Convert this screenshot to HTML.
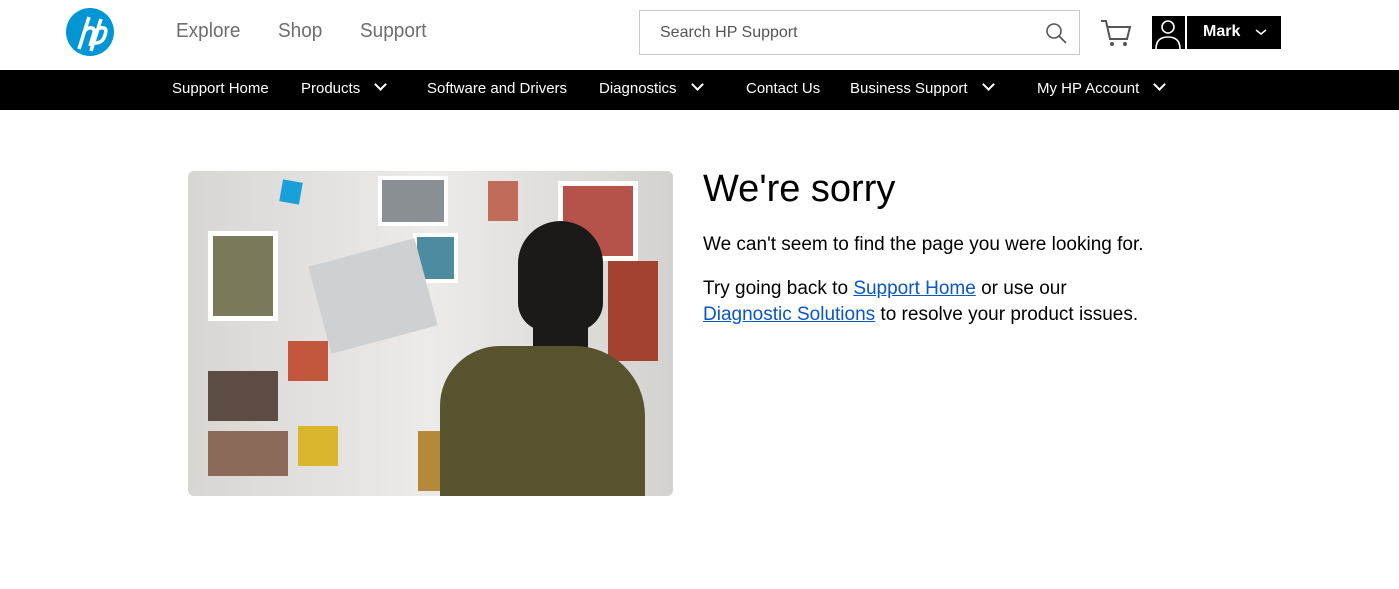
<!DOCTYPE html>
<html><head><style>
*{margin:0;padding:0;box-sizing:border-box}
body{width:1399px;height:589px;background:#fff;font-family:"Liberation Sans",sans-serif;position:relative;overflow:hidden}
.a{position:absolute}
.top a{color:#6e6e6e;font-size:20px;text-decoration:none;position:absolute;top:20px;transform:scaleX(0.95);transform-origin:left}
.nav{position:absolute;top:70px;left:0;width:1399px;height:40px;background:#000;color:#fff;font-size:15px}
.nav span{position:absolute;top:10px}
.chev{display:inline-block;width:9px;height:9px;border-right:2px solid #fff;border-bottom:2px solid #fff;transform:rotate(45deg);margin-left:16px;position:relative;top:-4px}
.p{font-size:19px;color:#000;position:absolute;left:703px}
.p a{color:#0a56c2;text-decoration:underline}
</style></head><body>
<svg class="a" style="left:66px;top:8px" width="48" height="48" viewBox="0 0 48 48"><circle cx="24" cy="24" r="24" fill="#0096d6"/><path d="M13 41 L23 9 M18 24 q3-5 8-4 q3 1 2 5 l-4 13 M25 43 L35 11 M31 22 q3-3 7-2 q3 1 1 7 q-2 8 -10 8" stroke="#fff" stroke-width="3.6" fill="none"/></svg>
<div class="top"><a style="left:176px">Explore</a><a style="left:278px">Shop</a><a style="left:360px">Support</a></div>
<div class="a" style="left:639px;top:10px;width:441px;height:45px;border:1px solid #c8c8c8"><span class="a" style="left:20px;top:13px;font-size:16px;color:#555">Search HP Support</span>
<svg class="a" style="left:405px;top:11px" width="22" height="22"><circle cx="9" cy="9" r="7" stroke="#555" stroke-width="1.6" fill="none"/><path d="M14 14 L21 21" stroke="#555" stroke-width="1.6"/></svg></div>
<svg class="a" style="left:1100px;top:18px" width="32" height="30"><path d="M1 3 h5 l4 18 h17 l3-12 h-22" stroke="#555" stroke-width="2" fill="none"/><circle cx="12" cy="26" r="2" fill="#555"/><circle cx="25" cy="26" r="2" fill="#555"/></svg>
<div class="a" style="left:1152px;top:16px;width:33px;height:33px;background:#000"><svg width="33" height="33"><circle cx="16" cy="11" r="6" stroke="#fff" stroke-width="1.6" fill="none"/><path d="M4 33 q0-12 12-12 q12 0 12 12" stroke="#fff" stroke-width="1.6" fill="none"/></svg></div>
<div class="a" style="left:1187px;top:16px;width:94px;height:33px;background:#000;color:#fff;font-size:16px;font-weight:bold"><span class="a" style="left:16px;top:7px">Mark</span><svg class="a" style="left:68px;top:12px" width="12" height="8"><path d="M1 2 L6 6 L11 2" stroke="#fff" stroke-width="1.5" fill="none"/></svg></div>
<div class="nav">
<span style="left:172px">Support Home</span>
<span style="left:301px">Products<i class="chev"></i></span>
<span style="left:427px">Software and Drivers</span>
<span style="left:599px">Diagnostics<i class="chev"></i></span>
<span style="left:746px">Contact Us</span>
<span style="left:850px">Business Support<i class="chev"></i></span>
<span style="left:1037px">My HP Account<i class="chev"></i></span>
</div>
<div class="a" style="left:188px;top:171px;width:485px;height:325px;border-radius:6px;overflow:hidden;background:#e6e4e2">
<div class="a" style="left:0;top:0;width:485px;height:325px;background:linear-gradient(90deg,#d8d6d3,#ecebea 50%,#d4d2cf)"></div>
<div class="a" style="left:20px;top:60px;width:70px;height:90px;background:#7a7a5a;border:5px solid #fff"></div>
<div class="a" style="left:93px;top:10px;width:20px;height:22px;background:#1aa0d8;transform:rotate(10deg)"></div>
<div class="a" style="left:190px;top:5px;width:70px;height:50px;background:#8a8f94;border:4px solid #fff"></div>
<div class="a" style="left:300px;top:10px;width:30px;height:40px;background:#c06a5a"></div>
<div class="a" style="left:370px;top:10px;width:80px;height:80px;background:#b5534a;border:5px solid #fff"></div>
<div class="a" style="left:225px;top:62px;width:45px;height:50px;background:#4d8ba0;border:4px solid #fff"></div>
<div class="a" style="left:130px;top:80px;width:110px;height:90px;background:#cfd0d2;transform:rotate(-15deg)"></div>
<div class="a" style="left:100px;top:170px;width:40px;height:40px;background:#c4563e"></div>
<div class="a" style="left:20px;top:200px;width:70px;height:50px;background:#5c4c44"></div>
<div class="a" style="left:20px;top:260px;width:80px;height:45px;background:#8b6a5a"></div>
<div class="a" style="left:110px;top:255px;width:40px;height:40px;background:#d9b62e"></div>
<div class="a" style="left:420px;top:90px;width:50px;height:100px;background:#a44232"></div>
<div class="a" style="left:230px;top:260px;width:30px;height:60px;background:#b48a3a"></div>
<div class="a" style="left:330px;top:50px;width:85px;height:110px;background:#1c1a18;border-radius:45px 45px 30px 30px"></div>
<div class="a" style="left:345px;top:130px;width:55px;height:70px;background:#1c1a18;border-radius:25px"></div>
<div class="a" style="left:252px;top:175px;width:205px;height:160px;background:#56532e;border-radius:60px 70px 0 0"></div>
</div>
<div class="a" style="left:703px;top:168px;font-size:38px;color:#000">We're sorry</div>
<div class="p" style="top:234px">We can't seem to find the page you were looking for.</div>
<div class="p" style="top:276px;line-height:26px">Try going back to <a>Support Home</a> or use our<br><a>Diagnostic Solutions</a> to resolve your product issues.</div>
</body></html>
